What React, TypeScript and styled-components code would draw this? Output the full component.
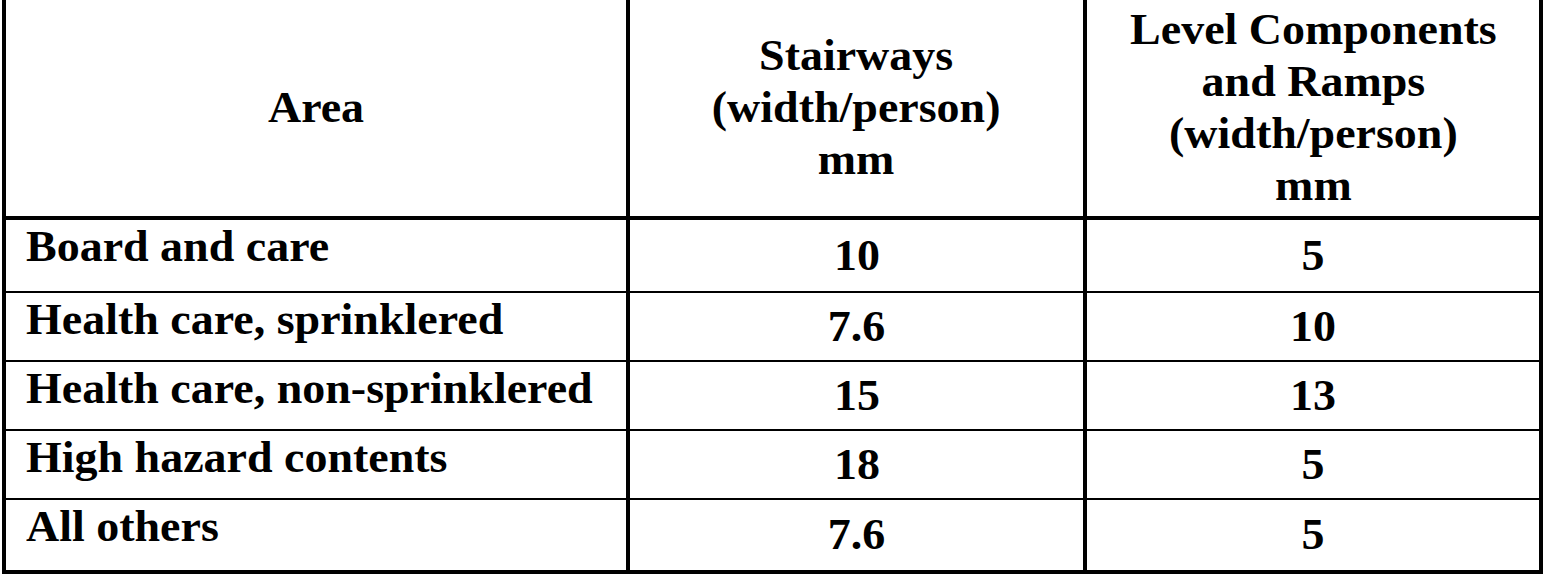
import React from 'react';
import styled, { createGlobalStyle } from 'styled-components';

const GlobalStyle = createGlobalStyle`
  html, body {
    margin: 0;
    padding: 0;
    background: #ffffff;
  }
  body {
    padding-left: 2px;
    font-family: "Liberation Serif", "Times New Roman", serif;
    color: #000000;
  }
`;

const Table = styled.div`
  display: grid;
  grid-template-columns: 620px 453px 452px;
  grid-template-rows: 218px 71px 67px 67px 67px 70px;
  column-gap: 4px;
  row-gap: 2px;
  width: max-content;
  background: #000000;
  border: 4px solid #000000;
  border-top: 0;
`;

const HeadCell = styled.div`
  background: #ffffff;
  border-bottom: 2px solid #000000;
  display: flex;
  align-items: center;
  justify-content: center;
  text-align: center;
  font-size: 44px;
  font-weight: 700;
  line-height: 52px;
`;

const AreaCell = styled.div`
  background: #ffffff;
  padding: 1px 0 0 20px;
  font-size: 44px;
  font-weight: 700;
  line-height: 52px;
  white-space: nowrap;
`;

const ValueCell = styled.div`
  background: #ffffff;
  display: flex;
  align-items: center;
  justify-content: center;
  font-size: 44px;
  font-weight: 700;
  line-height: 52px;
`;

// the source type is set a touch wider than Liberation Serif draws it
const Wide = styled.span<{ $origin?: 'left' | 'center' }>`
  display: inline-block;
  transform: scaleX(1.045);
  transform-origin: ${(p) => p.$origin ?? 'center'};
`;

const rows: [string, string, string][] = [
  ['Board and care', '10', '5'],
  ['Health care, sprinklered', '7.6', '10'],
  ['Health care, non-sprinklered', '15', '13'],
  ['High hazard contents', '18', '5'],
  ['All others', '7.6', '5'],
];

const App: React.FC = () => (
  <>
    <GlobalStyle />
    <Table>
      <HeadCell>
        <Wide>Area</Wide>
      </HeadCell>
      <HeadCell>
        <Wide>
          Stairways
          <br />
          (width/person)
          <br />
          mm
        </Wide>
      </HeadCell>
      <HeadCell>
        <Wide>
          Level Components
          <br />
          and Ramps
          <br />
          (width/person)
          <br />
          mm
        </Wide>
      </HeadCell>
      {rows.map(([area, stairs, ramps]) => (
        <React.Fragment key={area}>
          <AreaCell>
            <Wide $origin="left">{area}</Wide>
          </AreaCell>
          <ValueCell>
            <Wide>{stairs}</Wide>
          </ValueCell>
          <ValueCell>
            <Wide>{ramps}</Wide>
          </ValueCell>
        </React.Fragment>
      ))}
    </Table>
  </>
);

export default App;
